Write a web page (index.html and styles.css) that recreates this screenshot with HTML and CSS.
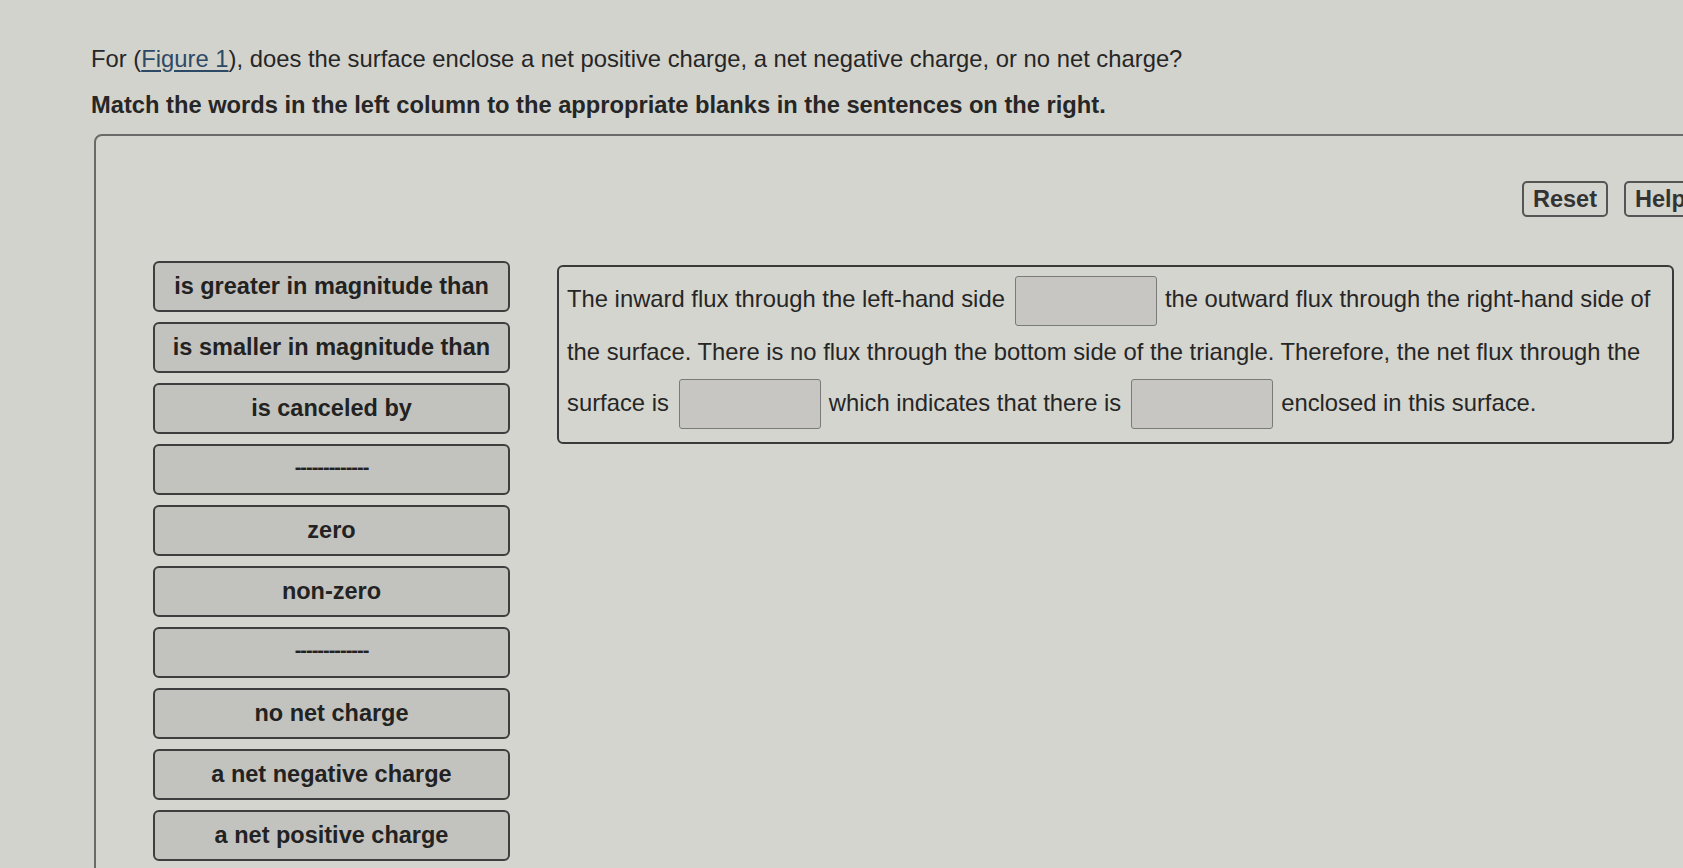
FILE: index.html
```html
<!DOCTYPE html>
<html lang="en">
<head>
  <meta charset="UTF-8"/>
  <meta name="viewport" content="width=device-width,initial-scale=1"/>
  <title>Part A - Matching</title>
  <link rel="stylesheet" href="styles.css">
</head>
<body>

  <div class="question">
    <p class="prompt">For (<a href="#" class="figure-link">Figure 1</a>), does the surface enclose a net positive charge, a net negative charge, or no net charge?</p>
    <p class="instructions">Match the words in the left column to the appropriate blanks in the sentences on the right.</p>
  </div>

  <!-- drag and drop answer area -->
  <div class="answer-box">
    <div class="toolbar">
      <button class="tool-btn">Reset</button>
      <button class="tool-btn">Help</button>
    </div>

    <div class="workspace">
      <div class="word-bank">
        <div class="word">is greater in magnitude than</div>
        <div class="word">is smaller in magnitude than</div>
        <div class="word">is canceled by</div>
        <div class="word divider">-------------</div>
        <div class="word">zero</div>
        <div class="word">non-zero</div>
        <div class="word divider">-------------</div>
        <div class="word">no net charge</div>
        <div class="word">a net negative charge</div>
        <div class="word">a net positive charge</div>
      </div>

      <div class="sentences">
        The inward flux through the left-hand side<span class="blank"></span>the outward flux through the right-hand side of
        the surface. There is no flux through the bottom side of the triangle. Therefore, the net flux through the
        surface is<span class="blank"></span>which indicates that there is<span class="blank"></span>enclosed in this surface.
      </div>
    </div>
  </div>

</body>
</html>
```

FILE: styles.css
```css
html, body { height: 100%; }
body {
  margin: 0; overflow: hidden;
  background: #d3d3cd; color: #262626;
  font-family: "Liberation Sans", Arial, sans-serif;
}
.question { padding: 45px 0 0 91px; }
.prompt { margin: 0; font-size: 23.8px; line-height: 28px; }
.figure-link { color: #2c4a66; text-decoration: underline; text-underline-offset: 3px; }
.instructions { margin: 18px 0 0; font-size: 23.7px; font-weight: bold; line-height: 28px; }

.answer-box {
  margin: 15px 0 0 94px; width: 1700px; height: 900px;
  border: 2px solid #6a6a68; border-radius: 8px 8px 0 0;
  background: #d5d5cf;
}
.toolbar { display: flex; gap: 16px; padding: 45px 0 0 1426px; }
.tool-btn {
  height: 36px; padding: 0 9px;
  background: #d4d4ce; border: 2px solid #555; border-radius: 5px;
  font-family: inherit; font-size: 23.5px; font-weight: bold; color: #333;
}

.workspace { display: flex; align-items: flex-start; gap: 47px; padding: 44px 0 0 57px; }
.word-bank { display: flex; flex-direction: column; gap: 10px; width: 357px; flex-shrink: 0; }
.word {
  height: 51px; box-sizing: border-box;
  display: flex; align-items: center; justify-content: center;
  background: #c2c2be; border: 2px solid #3e3e3e; border-radius: 6px;
  font-size: 23.5px; font-weight: bold; color: #222;
}
.divider { font-size: 20px; letter-spacing: -1px; padding-bottom: 4px; }

.sentences {
  width: 1117px; box-sizing: border-box; margin-top: 4px;
  padding: 6px 3px 13px 8px;
  border: 2px solid #3a3a3a; border-radius: 6px;
  font-size: 23.8px; line-height: 51px; color: #262626;
}
.blank {
  display: inline-block; width: 142px; height: 50px; margin: 0 8px 0 10px;
  vertical-align: middle; box-sizing: border-box;
  background: #c7c6c2; border: 1px solid #7a7a78; border-radius: 3px;
}
```
